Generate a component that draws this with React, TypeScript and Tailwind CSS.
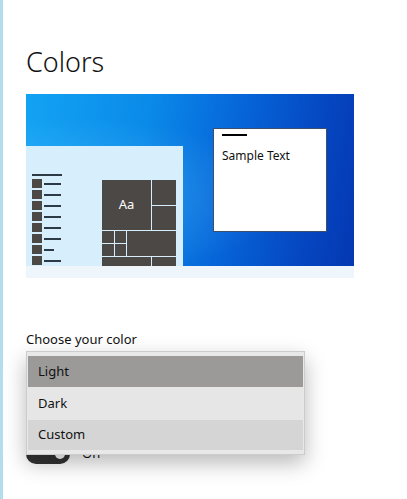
import React from 'react';

const font = { fontFamily: '"Noto Sans", "Open Sans", Arial, sans-serif' };

function StartList() {
  const rows = [17, 17, 17, 17, 17, 17, 10, 17];
  return (
    <div className="flex flex-col">
      <div className="h-[2px] w-[30px] bg-[#2b3a44]" />
      <div className="mt-[3px] flex flex-col gap-[2px]">
        {rows.map((w, i) => (
          <div key={i} className="flex items-center gap-[2px]">
            <div className="h-[9px] w-[10px] bg-[#4b4846]" />
            <div className="h-[2px] bg-[#2b3a44]" style={{ width: w }} />
          </div>
        ))}
      </div>
    </div>
  );
}

function Tiles() {
  return (
    <div className="flex flex-col pt-px">
      <div className="h-[2px] w-[30px] bg-[#2b3a44]" />
      <div className="mt-[5px] flex flex-col gap-px">
        <div className="flex gap-px">
          <div className="flex h-[50px] w-[49px] items-center justify-center bg-[#4b4846] text-[13px] text-white">
            Aa
          </div>
          <div className="flex w-[24px] flex-col gap-px">
            <div className="h-[25px] bg-[#4b4846]" />
            <div className="h-[24px] bg-[#4b4846]" />
          </div>
        </div>
        <div className="flex gap-px">
          <div className="grid h-[25px] w-[24px] grid-cols-2 grid-rows-2 gap-px">
            <div className="bg-[#4b4846]" />
            <div className="bg-[#4b4846]" />
            <div className="bg-[#4b4846]" />
            <div className="bg-[#4b4846]" />
          </div>
          <div className="h-[25px] w-[49px] bg-[#4b4846]" />
        </div>
        <div className="flex gap-px">
          <div className="h-[14px] w-[49px] bg-[#4b4846]" />
          <div className="h-[14px] w-[24px] bg-[#4b4846]" />
        </div>
      </div>
    </div>
  );
}

function Preview() {
  return (
    <div className="flex w-[328px] flex-col">
      <div className="relative h-[172px] overflow-hidden bg-[linear-gradient(100deg,#13a3f3_0%,#0a8ae9_35%,#0664d8_62%,#0546c0_85%,#0438b2_100%)]">
        <div className="absolute inset-0 bg-[radial-gradient(ellipse_at_10%_60%,rgba(120,210,255,0.35),transparent_55%)]" />
        <div className="absolute left-0 top-[52px] flex h-[120px] w-[157px] gap-[40px] overflow-hidden bg-[#d7effc] pl-[6px] pt-[28px]">
          <StartList />
          <Tiles />
        </div>
        <div className="absolute left-[187px] top-[34px] h-[104px] w-[114px] border border-[#3d4f6e] bg-white px-[8px] pt-[5px]">
          <div className="h-[2px] w-[25px] bg-black" />
          <div className="mt-[13px] text-[12px] leading-[14px] text-[#111]">Sample Text</div>
        </div>
      </div>
      <div className="h-[12px] bg-[#eef5fb]" />
    </div>
  );
}

export default function App() {
  return (
    <div className="flex min-h-[499px] bg-white" style={font}>
      <div className="w-[3px] shrink-0 bg-[#b3dcee]" />
      <div className="flex flex-1 flex-col pl-[23px]">
        <h1 className="mt-[45px] text-[27px] font-light leading-[34px] text-[#111]">Colors</h1>
        <div className="mt-[15px]">
          <Preview />
        </div>
        <div className="mt-[52px] text-[13px] leading-[18px] text-[#111]">Choose your color</div>
        <div className="relative mt-[3px]">
          <div className="h-[93px]" />
          <div className="flex items-center gap-3">
            <div className="flex h-[20px] w-[44px] items-center justify-end rounded-full bg-[#333] pr-[5px]">
              <div className="h-[10px] w-[10px] rounded-full bg-white" />
            </div>
            <span className="text-[13px] text-[#111]">On</span>
          </div>
          <div className="absolute left-0 top-0 w-[279px] border border-[#cccccc] bg-[#e8e8e8] px-px py-[4px] shadow-[0_8px_20px_rgba(0,0,0,0.28)]">
            <div className="flex h-[31px] items-center bg-[#9b9a99] pl-[10px] text-[13px] text-[#111]">Light</div>
            <div className="flex h-[33px] items-center bg-[#e6e6e6] pl-[10px] text-[13px] text-[#111]">Dark</div>
            <div className="flex h-[30px] items-center bg-[#d5d5d5] pl-[10px] text-[13px] text-[#111]">Custom</div>
          </div>
        </div>
      </div>
    </div>
  );
}
